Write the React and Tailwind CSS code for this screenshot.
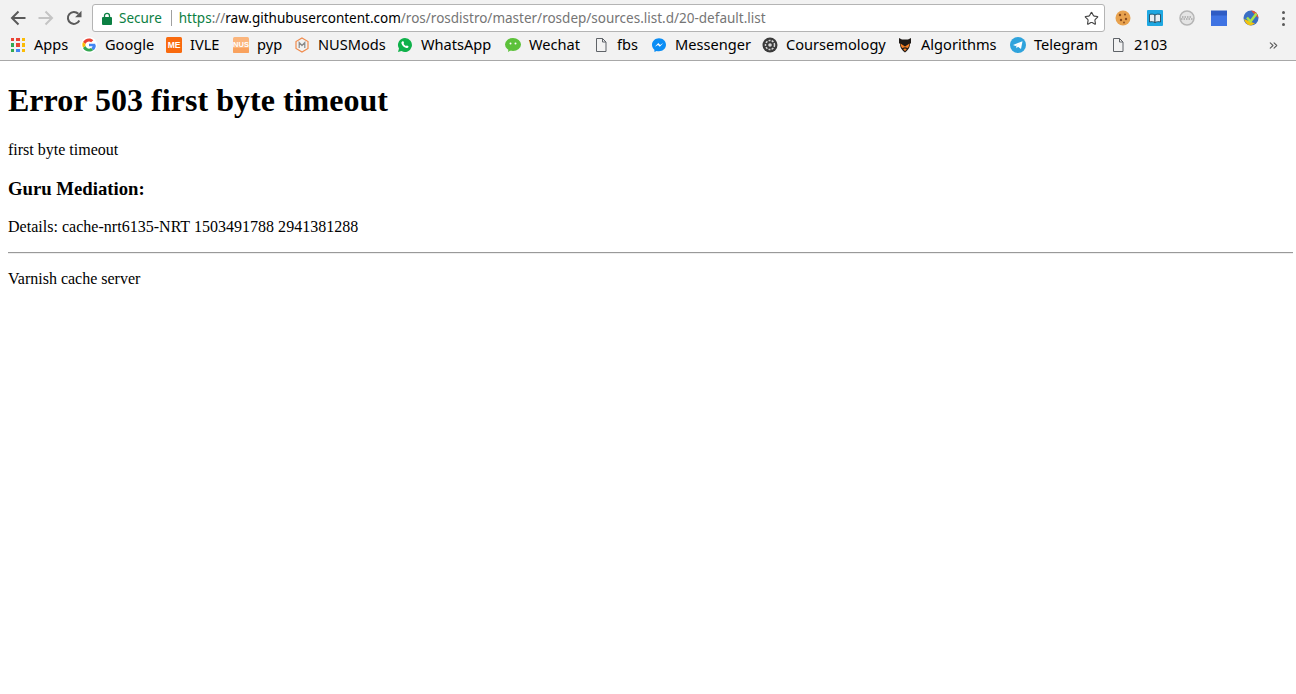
import React from 'react';
import { Star, ChevronsRight } from 'lucide-react';

const BackIcon = ({ color }) => (
  <svg width="16" height="16" viewBox="0 0 16 16" fill="none" stroke={color} strokeWidth="2" className="shrink-0">
    <path d="M15.500 8H2M8.500 1.500L2 8l6.500 6.500" />
  </svg>
);

const ForwardIcon = ({ color }) => (
  <svg width="16" height="16" viewBox="0 0 16 16" fill="none" stroke={color} strokeWidth="2" className="shrink-0">
    <path d="M.5 8H14M7.500 1.500L14 8l-6.500 6.500" />
  </svg>
);

const ReloadIcon = () => (
  <svg width="16" height="16" viewBox="0 0 16 16" fill="none" className="shrink-0">
    <path d="M13.300 10.500A6 6 0 1 1 12.300 3.800" stroke="#5a5a5a" strokeWidth="2" />
    <path d="M15.500 .8v6.400H9.100z" fill="#5a5a5a" />
  </svg>
);

const LockIcon = () => (
  <svg width="10" height="13" viewBox="0 0 10 13" className="shrink-0">
    <path d="M2.500 6V3.800a2.500 2.500 0 0 1 5 0V6" fill="none" stroke="#0b8043" strokeWidth="1.300" />
    <rect y="5" width="10" height="8" rx="1" fill="#0b8043" />
  </svg>
);

const PageIcon = () => (
  <svg width="16" height="16" viewBox="0 0 16 16" fill="none" stroke="#5f6368" strokeWidth="1">
    <path d="M3.500 1.500h6l3.500 3.500v9.500h-9.500z" />
    <path d="M9.500 1.500v3.500h3.500" />
  </svg>
);

const AppsIcon = () => {
  const colors = ['#ea4335', '#ea4335', '#fbbc05', '#34a853', '#ea4335', '#fbbc05', '#34a853', '#4285f4', '#fbbc05'];
  return (
    <div className="grid grid-cols-3 gap-[2px] w-[14px] h-[14px] ml-[1px]">
      {colors.map((c, i) => (
        <div key={i} style={{ backgroundColor: c }} />
      ))}
    </div>
  );
};

const GoogleIcon = () => (
  <svg width="16" height="16" viewBox="8 8 32 32">
    <circle cx="24" cy="24" r="16" fill="#fff" />
    <path fill="#ea4335" d="M24 11c3.400 0 6.300 1.200 8.600 3.300l-4.300 4.300c-1.200-1.100-2.600-1.700-4.300-1.700-3.300 0-6 2.200-7 5.200l-5-3.900C14.200 13.900 18.700 11 24 11z" />
    <path fill="#4285f4" d="M36.700 24.300c0-.9-.1-1.800-.2-2.600H24v5h7.200c-.3 1.600-1.300 3-2.700 3.900l4.800 3.700c2.800-2.600 4.400-5.900 4.400-10z" />
    <path fill="#fbbc05" d="M17 25.900c-.4-1.300-.4-2.600 0-3.800l-5-3.900c-1.700 3.400-1.700 7.600 0 11z" />
    <path fill="#34a853" d="M24 37c3.500 0 6.500-1.200 8.600-3.100l-4.800-3.700c-1.100.8-2.500 1.200-3.800 1.200-3.300 0-6.100-2.200-7-5.200l-5 3.900C14.200 34.100 18.700 37 24 37z" />
  </svg>
);

const IvleIcon = () => (
  <svg width="16" height="16" viewBox="0 0 16 16">
    <rect width="16" height="16" rx="1.500" fill="#f96a0e" />
    <text x="8" y="11" textAnchor="middle" fontSize="8.500" fontWeight="700" fill="#fff" fontFamily="Liberation Sans, sans-serif">ME</text>
  </svg>
);

const PypIcon = () => (
  <svg width="16" height="16" viewBox="0 0 16 16">
    <rect width="16" height="16" rx="1.500" fill="#fbb57c" />
    <rect y="11" width="16" height="5" rx="1" fill="#f9a25e" />
    <text x="8" y="10" textAnchor="middle" fontSize="7.500" fontWeight="700" fill="#fff" fontFamily="Liberation Sans, sans-serif">NUS</text>
  </svg>
);

const NusModsIcon = () => (
  <svg width="16" height="16" viewBox="0 0 16 16" fill="none">
    <path d="M8 1l6 3.500v7L8 15l-6-3.500v-7z" stroke="#f08a4b" strokeWidth="1.200" />
    <path d="M5.200 11V5.500L8 8.500l2.800-3V11" stroke="#8a8a8a" strokeWidth="1.200" />
  </svg>
);

const WhatsAppIcon = () => (
  <svg width="16" height="16" viewBox="0 0 16 16">
    <path fill="#0fb14a" d="M8 1a7 7 0 0 0-6 10.600L1 15l3.500-.9A7 7 0 1 0 8 1z" />
    <path fill="#fff" d="M5.500 4.300c.4-.3.800-.2 1 .2l.5 1.200c.1.300 0 .5-.5 1.100.5 1 1.300 1.700 2.400 2.300.5-.6.700-.8 1-.7l1.300.6c.3.200.4.400.2.900-.3.800-1.200 1.200-2 1-2.600-.5-4.500-2.500-5-4.600-.1-.8.200-1.500 1.100-2z" />
  </svg>
);

const WechatIcon = () => (
  <svg width="16" height="16" viewBox="0 0 16 16">
    <ellipse cx="8" cy="7.500" rx="8" ry="6.500" fill="#5cc13a" />
    <path d="M3.500 11.500L3 15l4-2.500z" fill="#5cc13a" />
    <circle cx="5.500" cy="6.500" r="1" fill="#fff" />
    <circle cx="10.500" cy="6.500" r="1" fill="#fff" />
  </svg>
);

const MessengerIcon = () => (
  <svg width="16" height="16" viewBox="0 0 16 16">
    <path fill="#0a8df5" d="M8 1.200C4.100 1.200 1 4.100 1 7.800c0 2 .9 3.800 2.400 5v2.300l2.200-1.200c.7.200 1.500.3 2.400.3 3.900 0 7-2.900 7-6.500S11.900 1.200 8 1.200z" />
    <path fill="#fff" d="M3.800 9.800L7.300 6l1.800 1.900L12.300 6 8.800 9.800 7 7.900z" />
  </svg>
);

const CoursemologyIcon = () => (
  <svg width="16" height="16" viewBox="0 0 16 16">
    <circle cx="8" cy="8" r="7.500" fill="#3a3a3a" />
    <circle cx="8" cy="8" r="4.500" fill="none" stroke="#d8d8d8" strokeWidth="1.500" strokeDasharray="2 1.200" />
    <circle cx="8" cy="8" r="1.800" fill="#d8d8d8" />
  </svg>
);

const AlgorithmsIcon = () => (
  <svg width="16" height="16" viewBox="0 0 16 16">
    <path fill="#1f1a17" d="M2 1l3 1.500h6L14 1v5l-1 1c0 4-2.500 6.500-5 8.500C5.500 13.500 3 11 3 7L2 6z" />
    <path fill="#f58025" d="M3.500 6.500L8 9.500l4.500-3c-.2 2.500-.9 3.500-1.700 4.500L8 10.300l-2.800.7c-.8-1-1.500-2-1.700-4.500z" />
    <path fill="#f58025" d="M8 11.500l1.800 .4L8 14.300l-1.800-2.400z" />
  </svg>
);

const TelegramIcon = () => (
  <svg width="16" height="16" viewBox="0 0 16 16">
    <circle cx="8" cy="8" r="8" fill="#2fa3dc" />
    <path fill="#fff" d="M3 8l9.500-3.700-1.500 7.700-3-2.200-1.500 1.500-.3-2.500L11 5.500 5.500 9z" />
  </svg>
);

const bookmarks = [
  { label: 'Apps', icon: <AppsIcon />, width: 'w-[71px]' },
  { label: 'Google', icon: <GoogleIcon />, width: 'w-[85px]' },
  { label: 'IVLE', icon: <IvleIcon />, width: 'w-[67px]' },
  { label: 'pyp', icon: <PypIcon />, width: 'w-[61px]' },
  { label: 'NUSMods', icon: <NusModsIcon />, width: 'w-[103px]' },
  { label: 'WhatsApp', icon: <WhatsAppIcon />, width: 'w-[108px]' },
  { label: 'Wechat', icon: <WechatIcon />, width: 'w-[88px]' },
  { label: 'fbs', icon: <PageIcon />, width: 'w-[58px]' },
  { label: 'Messenger', icon: <MessengerIcon />, width: 'w-[111px]' },
  { label: 'Coursemology', icon: <CoursemologyIcon />, width: 'w-[135px]' },
  { label: 'Algorithms', icon: <AlgorithmsIcon />, width: 'w-[113px]' },
  { label: 'Telegram', icon: <TelegramIcon />, width: 'w-[100px]' },
  { label: '2103', icon: <PageIcon />, width: 'w-[80px]' },
];

const ExtensionIcons = () => (
  <div className="flex items-center gap-[16px] ml-[10px]">
    {/* cookie */}
    <svg width="16" height="16" viewBox="0 0 16 16">
      <circle cx="8" cy="8" r="7.500" fill="#e8a24e" />
      <circle cx="5" cy="5" r="1.200" fill="#8a4b1c" />
      <circle cx="10" cy="4.500" r="1" fill="#8a4b1c" />
      <circle cx="11" cy="9" r="1.200" fill="#8a4b1c" />
      <circle cx="6" cy="10" r="1.200" fill="#8a4b1c" />
      <circle cx="9" cy="12.500" r=".9" fill="#8a4b1c" />
    </svg>
    {/* book */}
    <svg width="16" height="16" viewBox="0 0 16 16">
      <rect width="16" height="16" rx="1" fill="#1ea7e1" />
      <path d="M2.500 4.500c2-.6 4-.4 5.500.5v7.500c-1.500-.9-3.500-1.100-5.500-.5z" fill="#e8eef2" stroke="#12384d" strokeWidth=".8" />
      <path d="M13.500 4.500c-2-.6-4-.4-5.500.5v7.500c1.500-.9 3.500-1.100 5.500-.5z" fill="#e8eef2" stroke="#12384d" strokeWidth=".8" />
    </svg>
    {/* grey badge */}
    <svg width="16" height="16" viewBox="0 0 16 16">
      <circle cx="8" cy="8" r="7" fill="#e4e4e4" stroke="#b5b5b5" strokeWidth="1.500" />
      <path d="M2 9h12M3 7h10" stroke="#a8a8a8" strokeWidth="1.500" strokeDasharray="1.500 1" />
    </svg>
    {/* blue box */}
    <svg width="16" height="16" viewBox="0 0 16 16">
      <rect y="1" width="16" height="15" fill="#3f73e3" />
      <rect width="16" height="5" y="0.500" fill="#2f5cc4" />
    </svg>
    {/* check ball */}
    <svg width="16" height="16" viewBox="0 0 16 16">
      <circle cx="8" cy="8" r="7.500" fill="#3a6fc4" />
      <path d="M8 .5a7.500 7.500 0 0 1 7.500 7.500L12 5z" fill="#e8543a" />
      <path d="M1 9a7.500 7.500 0 0 0 7 6.500l4-2z" fill="#f4c20d" />
      <path d="M4 7.500l3.500 4 6-8" fill="none" stroke="#a9e34b" strokeWidth="2.500" />
    </svg>
  </div>
);

export default function App() {
  return (
    <div className="min-h-[694px] bg-white">
      {/* Browser chrome */}
      <div className="h-[61px] bg-[#f2f2f2] border-b border-[#a8a8a8] font-['Noto_Sans',sans-serif] text-black">
        <div className="h-[32px] pt-[4px] flex items-center pl-[10px] pr-[6px]">
          <BackIcon color="#5a5a5a" />
          <div className="ml-[12px]">
            <ForwardIcon color="#c4c4c4" />
          </div>
          <div className="ml-[12px]">
            <ReloadIcon />
          </div>
          <div className="ml-[10px] w-[1013px] h-[28px] shrink-0 bg-white border border-[#b4b4b4] rounded-[3px] flex items-center pl-[9px] pr-[5px] text-[13.500px]">
            <LockIcon />
            <span className="ml-[7px] text-[#0b8043]">Secure</span>
            <div className="w-px h-[16px] bg-[#a0a0a0] ml-[9px] mr-[7px]" />
            <span className="whitespace-nowrap text-[#757575]">
              <span className="text-[#0b8043]">https</span>://
              <span className="text-black">raw.githubusercontent.com</span>/ros/rosdistro/master/rosdep/sources.list.d/20-default.list
            </span>
            <Star size={15} strokeWidth={1.800} className="text-[#444] ml-auto shrink-0" />
          </div>
          <ExtensionIcons />
          <div className="ml-[23px] flex flex-col gap-[3px]">
            <div className="w-[3px] h-[3px] rounded-full bg-[#5a5a5a]" />
            <div className="w-[3px] h-[3px] rounded-full bg-[#5a5a5a]" />
            <div className="w-[3px] h-[3px] rounded-full bg-[#5a5a5a]" />
          </div>
        </div>
        <div className="h-[26px] flex items-center pl-[10px] pr-[16px] text-[14.600px]">
          {bookmarks.map((b) => (
            <div key={b.label} className={`${b.width} shrink-0 flex items-center gap-[8px]`}>
              <div className="w-[16px] h-[16px] shrink-0 flex items-center">{b.icon}</div>
              <span className="whitespace-nowrap">{b.label}</span>
            </div>
          ))}
          <ChevronsRight size={13} strokeWidth={2} className="text-[#5a5a5a] ml-auto" />
        </div>
      </div>

      {/* Error page */}
      <div className="pt-[8px] pb-[8px] pl-[8px] pr-[3px] font-['Liberation_Serif',serif] text-[16px] leading-[18px] text-black">
        <h1 className="text-[32px] leading-[37px] font-bold mt-[13px] mb-[22px] tracking-[0.03px]">Error 503 first byte timeout</h1>
        <p className="mb-[19px]">first byte timeout</p>
        <h3 className="text-[18.720px] leading-[21px] font-bold mb-[19px]">Guru Mediation:</h3>
        <p className="tracking-[0.02px]">Details: cache-nrt6135-NRT 1503491788 2941381288</p>
        <hr className="mt-[16px] mb-[17px] border-t border-[#999] shadow-[0_1px_0_#eee]" />
        <p>Varnish cache server</p>
      </div>
    </div>
  );
}
